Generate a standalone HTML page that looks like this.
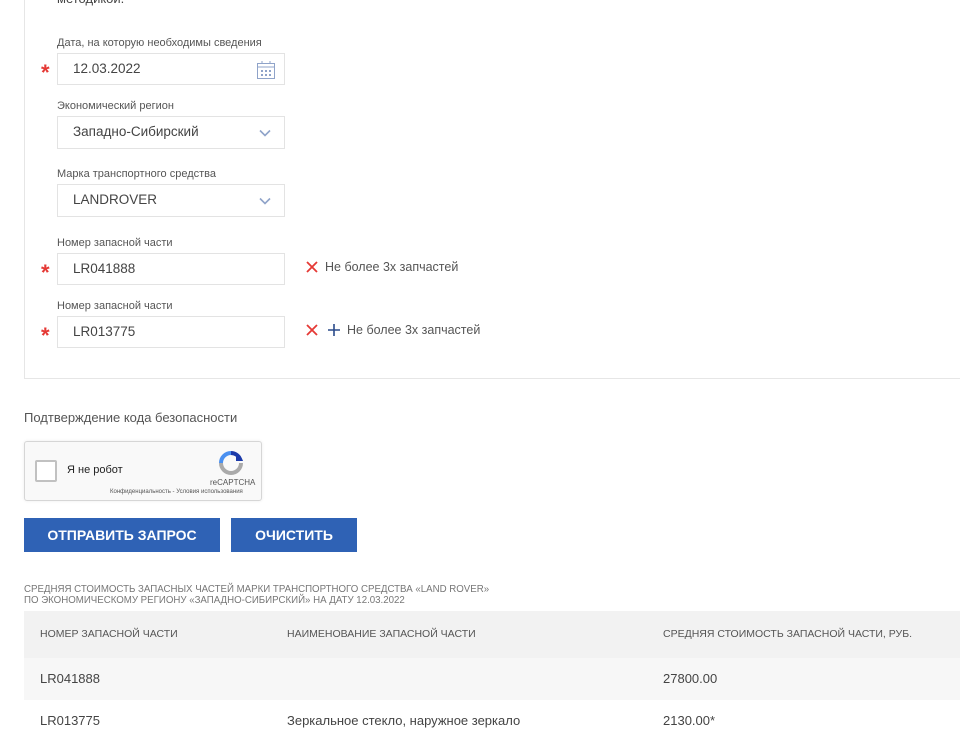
<!DOCTYPE html>
<html><head><meta charset="utf-8"><style>
*{margin:0;padding:0;box-sizing:border-box}
body{width:960px;height:731px;overflow:hidden;background:#fff;font-family:"Liberation Sans",sans-serif;color:#555;position:relative}
.a{position:absolute;white-space:nowrap}
.lbl{font-size:11px;color:#555}
.inp{position:absolute;left:57px;width:228px;height:32px;border:1px solid #e3e3e3;background:#fff;font-size:13.5px;color:#444;padding-left:15px;line-height:30px}
.star{position:absolute;left:41px;color:#e53935;font-size:22px;font-weight:bold}
.chev{position:absolute;right:12px;top:9px}
.btn{position:absolute;top:518px;height:34px;background:#2f62b5;color:#fff;font-size:14px;font-weight:bold;text-align:center;line-height:34px}
.th{font-size:10.5px;color:#555}
.td{font-size:13px;color:#444}
</style></head><body>
<div class="a" style="left:24px;top:0;width:1px;height:379px;background:#e6e6e6"></div>
<div class="a" style="left:24px;top:378px;width:936px;height:1px;background:#e6e6e6"></div>
<div class="a" style="left:57px;top:-9px;font-size:13px;color:#444">методикой.</div>

<div class="a lbl" style="left:57px;top:37px">Дата, на которую необходимы сведения</div>
<div class="star" style="top:60px">*</div>
<div class="inp" style="top:53px">12.03.2022
<svg class="chev" style="top:6px;right:8px" width="20" height="20" viewBox="0 0 20 20"><rect x="1.5" y="3.5" width="17" height="15" fill="none" stroke="#8fa3c9"/><line x1="1.5" y1="7" x2="18.5" y2="7" stroke="#8fa3c9"/><line x1="6" y1="1" x2="6" y2="4" stroke="#8fa3c9"/><line x1="14" y1="1" x2="14" y2="4" stroke="#8fa3c9"/><g fill="#8fa3c9"><rect x="5" y="10" width="2" height="2"/><rect x="9" y="10" width="2" height="2"/><rect x="13" y="10" width="2" height="2"/><rect x="5" y="14" width="2" height="2"/><rect x="9" y="14" width="2" height="2"/><rect x="13" y="14" width="2" height="2"/></g></svg></div>

<div class="a lbl" style="left:57px;top:100px">Экономический регион</div>
<div class="inp" style="top:116px;height:33px">Западно-Сибирский
<svg class="chev" width="14" height="14" viewBox="0 0 14 14"><path d="M2 4.5l5 5 5-5" fill="none" stroke="#8fa3c9" stroke-width="1.6"/></svg></div>

<div class="a lbl" style="left:57px;top:168px">Марка транспортного средства</div>
<div class="inp" style="top:184px;height:33px">LANDROVER
<svg class="chev" width="14" height="14" viewBox="0 0 14 14"><path d="M2 4.5l5 5 5-5" fill="none" stroke="#8fa3c9" stroke-width="1.6"/></svg></div>

<div class="a lbl" style="left:57px;top:237px">Номер запасной части</div>
<div class="star" style="top:260px">*</div>
<div class="inp" style="top:253px">LR041888</div>
<svg class="a" style="left:306px;top:261px" width="12" height="12" viewBox="0 0 12 12"><path d="M1 1l10 10M11 1L1 11" stroke="#e53935" stroke-width="1.8"/></svg>
<div class="a" style="left:325px;top:260px;font-size:12.5px;color:#555">Не более 3х запчастей</div>

<div class="a lbl" style="left:57px;top:300px">Номер запасной части</div>
<div class="star" style="top:323px">*</div>
<div class="inp" style="top:316px">LR013775</div>
<svg class="a" style="left:306px;top:324px" width="12" height="12" viewBox="0 0 12 12"><path d="M1 1l10 10M11 1L1 11" stroke="#e53935" stroke-width="1.8"/></svg>
<svg class="a" style="left:328px;top:324px" width="12" height="12" viewBox="0 0 12 12"><path d="M6 0v12M0 6h12" stroke="#2a4a8a" stroke-width="1.6"/></svg>
<div class="a" style="left:347px;top:323px;font-size:12.5px;color:#555">Не более 3х запчастей</div>

<div class="a" style="left:24px;top:410px;font-size:13px;color:#555">Подтверждение кода безопасности</div>
<div class="a" style="left:24px;top:441px;width:238px;height:60px;border:1px solid #d6d6d6;border-radius:3px;background:#f9f9f9;box-shadow:0 0 3px rgba(0,0,0,.08)">
<div class="a" style="left:10px;top:18px;width:22px;height:22px;border:2px solid #c1c1c1;border-radius:2px;background:#fff"></div>
<div class="a" style="left:42px;top:22px;font-size:11px;color:#222">Я не робот</div>
<svg class="a" style="left:193px;top:8px" width="26" height="26" viewBox="0 0 26 26"><path d="M13 3a10 10 0 0 1 9 6l-4 0" fill="none" stroke="#1c3aa9" stroke-width="4"/><path d="M3 13a10 10 0 0 1 10-10" fill="none" stroke="#4a90f0" stroke-width="4"/><path d="M13 23a10 10 0 0 1-10-10M23 13a10 10 0 0 1-10 10" fill="none" stroke="#aaa" stroke-width="4"/></svg>
<div class="a" style="left:185px;top:36px;font-size:8px;color:#555">reCAPTCHA</div>
<div class="a" style="left:85px;top:47px;font-size:6px;color:#555">Конфиденциальность - Условия использования</div>
</div>

<div class="btn" style="left:24px;width:196px">ОТПРАВИТЬ ЗАПРОС</div>
<div class="btn" style="left:231px;width:126px">ОЧИСТИТЬ</div>

<div class="a" style="left:24px;top:584px;font-size:9.7px;color:#777;line-height:11px">СРЕДНЯЯ СТОИМОСТЬ ЗАПАСНЫХ ЧАСТЕЙ МАРКИ ТРАНСПОРТНОГО СРЕДСТВА «LAND ROVER»<br>ПО ЭКОНОМИЧЕСКОМУ РЕГИОНУ «ЗАПАДНО-СИБИРСКИЙ» НА ДАТУ 12.03.2022</div>
<div class="a" style="left:24px;top:611px;width:936px;height:47px;background:#f2f2f2"></div>
<div class="a" style="left:24px;top:658px;width:936px;height:42px;background:#f7f7f7"></div>
<div class="a th" style="left:40px;top:628px">НОМЕР ЗАПАСНОЙ ЧАСТИ</div>
<div class="a th" style="left:287px;top:628px">НАИМЕНОВАНИЕ ЗАПАСНОЙ ЧАСТИ</div>
<div class="a th" style="left:663px;top:628px">СРЕДНЯЯ СТОИМОСТЬ ЗАПАСНОЙ ЧАСТИ, РУБ.</div>
<div class="a td" style="left:40px;top:671px">LR041888</div>
<div class="a td" style="left:663px;top:671px">27800.00</div>
<div class="a td" style="left:40px;top:713px">LR013775</div>
<div class="a td" style="left:287px;top:713px">Зеркальное стекло, наружное зеркало</div>
<div class="a td" style="left:663px;top:713px">2130.00*</div>
</body></html>
